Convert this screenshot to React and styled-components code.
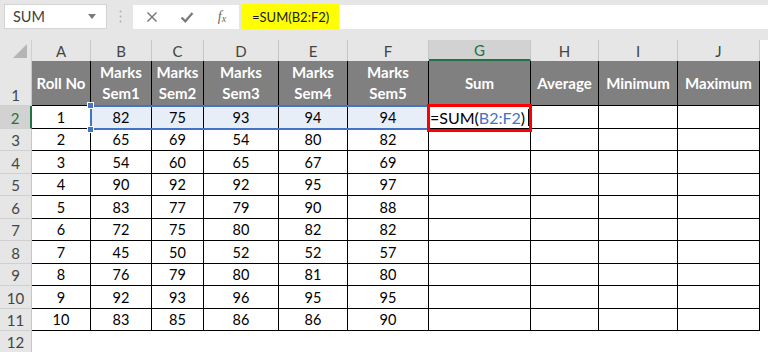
import React from "react";
import styled, { createGlobalStyle } from "styled-components";

const columns = [
    { name: "A", width: 59 },
    { name: "B", width: 61 },
    { name: "C", width: 52 },
    { name: "D", width: 75 },
    { name: "E", width: 69 },
    { name: "F", width: 81 },
    { name: "G", width: 102 },
    { name: "H", width: 68 },
    { name: "I", width: 79 },
    { name: "J", width: 82 },
];

const headings = [
    ["Roll No"],
    ["Marks", "Sem1"],
    ["Marks", "Sem2"],
    ["Marks", "Sem3"],
    ["Marks", "Sem4"],
    ["Marks", "Sem5"],
    ["Sum"],
    ["Average"],
    ["Minimum"],
    ["Maximum"],
];

const marks = [
    [82, 75, 93, 94, 94],
    [65, 69, 54, 80, 82],
    [54, 60, 65, 67, 69],
    [90, 92, 92, 95, 97],
    [83, 77, 79, 90, 88],
    [72, 75, 80, 82, 82],
    [45, 50, 52, 52, 57],
    [76, 79, 80, 81, 80],
    [92, 93, 96, 95, 95],
    [83, 85, 86, 86, 90],
];

export default function App() {
    return (
        <>
            <GlobalStyle />
            <Window>
                <FormulaRow>
                    <NameBox>
                        <span>SUM</span>
                        <DropArrow>
                            <svg width="8" height="5" viewBox="0 0 8 5">
                                <path d="M0 0h8L4 5z" fill="#7a7a7a" />
                            </svg>
                        </DropArrow>
                    </NameBox>
                    <Grip>
                        <svg width="3" height="13" viewBox="0 0 3 13">
                            <circle cx="1.5" cy="1.5" r="1" fill="#b0b0b0" />
                            <circle cx="1.5" cy="6.5" r="1" fill="#b0b0b0" />
                            <circle cx="1.5" cy="11.5" r="1" fill="#b0b0b0" />
                        </svg>
                    </Grip>
                    <FormulaBar>
                        <IconGroup>
                            <IconSlot>
                                <svg width="12" height="12" viewBox="0 0 12 12">
                                    <path
                                        d="M1.5 1.5l9 9M10.5 1.5l-9 9"
                                        stroke="#7a7a7a"
                                        strokeWidth="1.5"
                                    />
                                </svg>
                            </IconSlot>
                            <IconSlot>
                                <svg width="14" height="12" viewBox="0 0 14 12">
                                    <path
                                        d="M1.5 6.5l3.8 3.8L12.5 2"
                                        stroke="#7a7a7a"
                                        strokeWidth="2.2"
                                        fill="none"
                                    />
                                </svg>
                            </IconSlot>
                            <IconSlot>
                                <Fx>
                                    f<sub>x</sub>
                                </Fx>
                            </IconSlot>
                        </IconGroup>
                        <FormulaInput>
                            <Highlight>=SUM(B2:F2)</Highlight>
                        </FormulaInput>
                    </FormulaBar>
                </FormulaRow>

                <Sheet>
                    <Corner $row={1} $col={1}>
                        <svg width="14" height="14" viewBox="0 0 14 14">
                            <path d="M14 0v14H0z" fill="#b5b5b5" />
                        </svg>
                    </Corner>
                    {columns.map((c, i) => (
                        <ColHead
                            key={c.name}
                            $row={1}
                            $col={i + 2}
                            $active={c.name === "G"}
                        >
                            {c.name}
                        </ColHead>
                    ))}
                    <Blank $row={1} $col={12} />

                    <RowHead $row={2} $col={1}>1</RowHead>
                    {headings.map((h, i) => (
                        <HeadCell key={i} $row={2} $col={i + 2}>
                            {h.map((line) => (
                                <span key={line}>{line}</span>
                            ))}
                        </HeadCell>
                    ))}

                    {marks.map((row, r) => (
                        <React.Fragment key={r}>
                            <RowHead $row={r + 3} $col={1} $active={r === 0}>
                                {r + 2}
                            </RowHead>
                            <Cell $row={r + 3} $col={2}>
                                {r + 1}
                            </Cell>
                            {row.map((m, c) => (
                                <Cell
                                    key={c}
                                    $row={r + 3}
                                    $col={c + 3}
                                    $picked={r === 0}
                                >
                                    {m}
                                </Cell>
                            ))}
                            {[8, 9, 10, 11].map((c) => (
                                <Cell key={c} $row={r + 3} $col={c}>
                                    {r === 0 && c === 8 ? (
                                        <Formula>
                                            =SUM(<Ref>B2:F2</Ref>)<Caret />
                                        </Formula>
                                    ) : null}
                                </Cell>
                            ))}
                        </React.Fragment>
                    ))}

                    <RowHead $row={13} $col={1}>12</RowHead>

                    <Selection $row={3} $col="3 / 8">
                        <Handle $top />
                        <Handle />
                    </Selection>
                    <ActiveCell $row={3} $col={8} />
                </Sheet>
            </Window>
        </>
    );
}

const GlobalStyle = createGlobalStyle`
    * {
        box-sizing: border-box;
    }
    body {
        margin: 0;
        background: #ffffff;
        font-family: "Lato", "Open Sans", sans-serif;
    }
`;

const Window = styled.div`
    width: 768px;
    height: 352px;
    overflow: hidden;
    background: #ffffff;
`;

const FormulaRow = styled.div`
    display: flex;
    align-items: center;
    height: 40px;
    padding: 4px 0 11px 4px;
    background: #e6e6e6;
`;

const NameBox = styled.div`
    width: 103px;
    height: 25px;
    display: flex;
    align-items: center;
    justify-content: space-between;
    padding: 0 10px 0 8px;
    background: #ffffff;
    border: 1px solid #d4d4d4;
    font-size: 14.5px;
    color: #404040;
`;

const DropArrow = styled.span`
    display: flex;
    align-items: center;
`;

const Grip = styled.div`
    width: 26px;
    display: flex;
    justify-content: center;
`;

const FormulaBar = styled.div`
    flex: 1;
    height: 24px;
    display: flex;
    align-items: stretch;
    background: #ffffff;
    margin-top: 1px;
`;

const IconGroup = styled.div`
    width: 108px;
    display: flex;
    align-items: center;
    gap: 11px;
    padding-left: 7px;
    border-right: 2px solid #e6e6e6;
`;

const IconSlot = styled.span`
    width: 24px;
    display: flex;
    justify-content: center;
    align-items: center;
`;

const Fx = styled.span`
    font-family: "Liberation Serif", serif;
    font-style: italic;
    font-size: 14px;
    color: #6a6a6a;

    sub {
        font-size: 10px;
        vertical-align: -1px;
    }
`;

const FormulaInput = styled.div`
    flex: 1;
    display: flex;
    align-items: stretch;
    margin-top: -1px;
`;

const Highlight = styled.span`
    width: 98px;
    background: #ffff00;
    display: flex;
    align-items: center;
    padding-left: 11px;
    font-size: 13px;
    color: #1a1a1a;
`;

const Sheet = styled.div`
    position: relative;
    display: grid;
    grid-template-columns: 32px ${columns.map((c) => c.width + "px").join(" ")} 1fr;
    grid-template-rows: 21px 45px repeat(10, 22.5px) 22px;
`;

const Placed = styled.div`
    grid-row: ${(p) => p.$row};
    grid-column: ${(p) => p.$col};
    display: flex;
    align-items: center;
    justify-content: center;
`;

const Corner = styled(Placed)`
    background: #e6e6e6;
    border-right: 1px solid #cfcfcf;
    justify-content: flex-end;
    align-items: flex-end;
    padding: 0 4px 3px 0;
`;

const ColHead = styled(Placed)`
    background: ${(p) => (p.$active ? "#d2d2d2" : "#e6e6e6")};
    color: ${(p) => (p.$active ? "#217346" : "#444444")};
    border-right: 1px solid #c6c6c6;
    border-bottom: ${(p) => (p.$active ? "2px solid #217346" : "none")};
    font-size: 15px;
`;

const Blank = styled(Placed)`
    background: #ffffff;
`;

const RowHead = styled(Placed)`
    background: ${(p) => (p.$active ? "#d2d2d2" : "#e6e6e6")};
    color: ${(p) => (p.$active ? "#217346" : "#444444")};
    border-right: ${(p) => (p.$active ? "2px solid #217346" : "1px solid #c6c6c6")};
    border-bottom: 1px solid #d0d0d0;
    align-items: flex-end;
    padding-bottom: 1px;
    font-size: 15px;
`;

const HeadCell = styled(Placed)`
    flex-direction: column;
    background: #808080;
    color: #ffffff;
    font-weight: 700;
    font-size: 15px;
    line-height: 21px;
    border-right: 1px solid #000000;
    border-bottom: 1px solid #000000;
`;

const Cell = styled(Placed)`
    background: ${(p) => (p.$picked ? "#e8eef8" : "#ffffff")};
    border-right: 1px solid #000000;
    border-bottom: 1px solid #000000;
    font-size: 14.5px;
    color: #000000;
    padding-top: 1px;
`;

const Formula = styled.span`
    align-self: center;
    width: 100%;
    display: flex;
    align-items: center;
    padding-left: 1px;
    font-size: 16px;
    color: #000000;
    white-space: nowrap;
`;

const Ref = styled.span`
    color: #4472c4;
`;

const Caret = styled.span`
    display: inline-block;
    width: 1px;
    height: 17px;
    margin-left: 3px;
    background: #000000;
`;

const Selection = styled.div`
    grid-row: ${(p) => p.$row};
    grid-column: ${(p) => p.$col};
    position: relative;
    margin: -1px 0 -1px -1px;
    border: 2px solid #4472c4;
    pointer-events: none;
`;

const Handle = styled.span`
    position: absolute;
    left: -5px;
    ${(p) => (p.$top ? "top: -5px;" : "bottom: -5px;")}
    width: 7px;
    height: 7px;
    background: #4472c4;
    border: 1px solid #ffffff;
`;

const ActiveCell = styled.div`
    grid-row: ${(p) => p.$row};
    grid-column: ${(p) => p.$col};
    position: relative;
    margin: -2px -1px -3px -2px;
    border: 3px solid #ff0000;
    pointer-events: none;
`;
